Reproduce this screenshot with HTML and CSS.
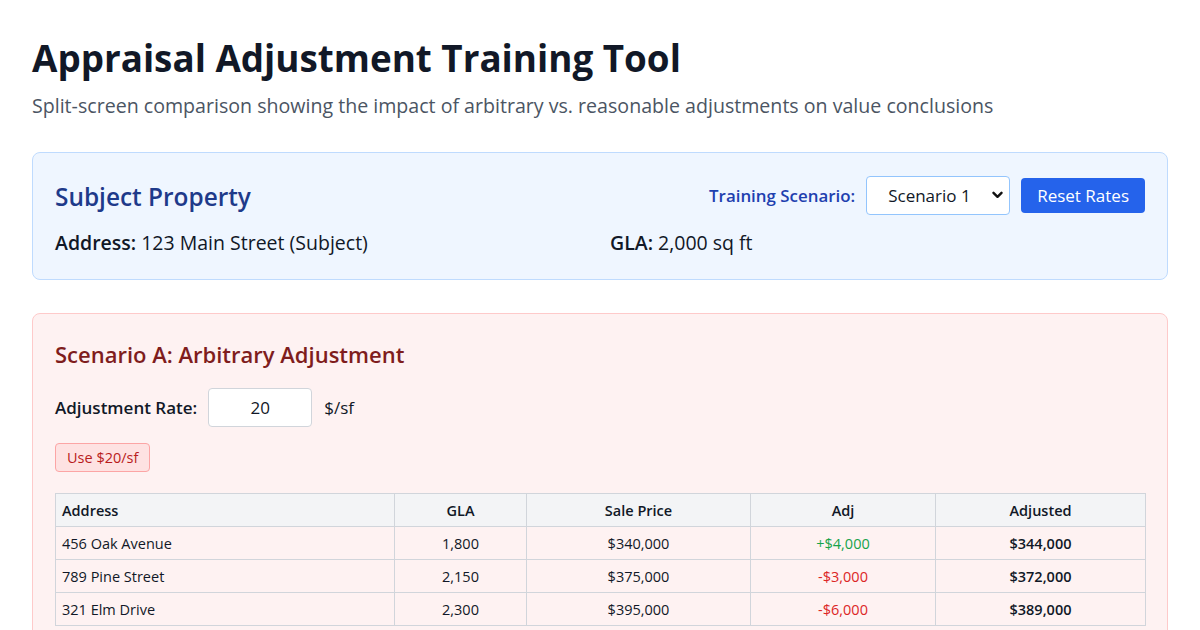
FILE: index.html
```html
<!DOCTYPE html>
<html lang="en">
<head>
<meta charset="utf-8">
<title>Appraisal Adjustment Training Tool</title>
<link rel="stylesheet" href="styles.css">
</head>
<body>
<div class="page">
  <h1 class="title">Appraisal Adjustment Training Tool</h1>
  <p class="subtitle">Split-screen comparison showing the impact of arbitrary vs. reasonable adjustments on value conclusions</p>

  <section class="subject">
    <div class="subject-head">
      <h2 class="subject-title">Subject Property</h2>
      <div class="controls">
        <label class="ctrl-label" for="scenario">Training Scenario:</label>
        <span class="select-wrap">
          <select id="scenario" class="select">
            <option>Scenario 1</option>
            <option>Scenario 2</option>
          </select>
          <svg class="chev" width="11" height="8" viewBox="0 0 11 8"><path d="M1.5 1.8 L5.5 5.8 L9.5 1.8" fill="none" stroke="#111" stroke-width="2.4" stroke-linecap="round" stroke-linejoin="round"/></svg>
        </span>
        <button class="btn-primary">Reset Rates</button>
      </div>
    </div>
    <div class="subject-info">
      <div><b>Address:</b> 123 Main Street (Subject)</div>
      <div><b>GLA:</b> 2,000 sq ft</div>
    </div>
  </section>

  <section class="scenario">
    <h3 class="scenario-title">Scenario A: Arbitrary Adjustment</h3>
    <div class="rate-row">
      <label class="rate-label" for="rate">Adjustment Rate:</label>
      <input id="rate" class="rate-input" type="text" value="20">
      <span class="unit">$/sf</span>
    </div>
    <button class="btn-soft">Use $20/sf</button>
    <table class="grid">
      <colgroup>
        <col class="c1"><col class="c2"><col class="c3"><col class="c4"><col class="c5">
      </colgroup>
      <thead>
        <tr><th class="left">Address</th><th>GLA</th><th>Sale Price</th><th>Adj</th><th>Adjusted</th></tr>
      </thead>
      <tbody>
        <tr><td class="left">456 Oak Avenue</td><td>1,800</td><td>$340,000</td><td class="pos">+$4,000</td><td class="strong">$344,000</td></tr>
        <tr><td class="left">789 Pine Street</td><td>2,150</td><td>$375,000</td><td class="neg">-$3,000</td><td class="strong">$372,000</td></tr>
        <tr><td class="left">321 Elm Drive</td><td>2,300</td><td>$395,000</td><td class="neg">-$6,000</td><td class="strong">$389,000</td></tr>
      </tbody>
    </table>
  </section>
</div>
</body>
</html>
```

FILE: styles.css
```css
* { box-sizing: border-box; }
html, body { margin: 0; padding: 0; background: #ffffff; }
body {
  font-family: "Open Sans", "Noto Sans", sans-serif;
  color: #111827;
}
.page {
  padding: 33px 32px 0 32px;
}
.title {
  margin: 0;
  font-size: 36.8px;
  line-height: 50px;
  font-weight: 700;
  color: #111827;
}
.subtitle {
  margin: 9px 0 32px 0;
  font-size: 19.6px;
  line-height: 28px;
  color: #4b5563;
}
.subject {
  border: 1.5px solid #bfdbfe;
  background: #eff6ff;
  border-radius: 8px;
  padding: 23px 22px 24px 22px;
}
.subject-head {
  display: flex;
  justify-content: space-between;
  align-items: center;
}
.subject-title {
  margin: 0;
  font-size: 24.4px;
  line-height: 36px;
  padding-top: 3px;
  font-weight: 600;
  color: #1e3a8a;
}
.controls {
  display: flex;
  align-items: center;
  gap: 11px;
}
.ctrl-label {
  font-size: 16.9px;
  font-weight: 600;
  color: #1e40af;
}
.select-wrap {
  position: relative;
  display: inline-block;
}
.select {
  display: block;
  appearance: none;
  -webkit-appearance: none;
  width: 144px;
  height: 39px;
  border: 1px solid #93c5fd;
  border-radius: 4px;
  background: #ffffff;
  font-family: inherit;
  font-size: 17px;
  color: #111827;
  padding: 0 0 0 21px;
}
.chev {
  position: absolute;
  right: 7px;
  top: 15px;
  pointer-events: none;
}
.btn-primary {
  height: 35px;
  padding: 0 16px;
  background: #2563eb;
  color: #ffffff;
  border: none;
  border-radius: 4px;
  font-family: inherit;
  font-size: 17px;
}
.subject-info {
  margin-top: 16px;
  display: grid;
  grid-template-columns: 1fr 1fr;
  column-gap: 20px;
  font-size: 19.5px;
  line-height: 24px;
}
.subject-info b { font-weight: 600; }

.scenario {
  margin-top: 33px;
  border: 1.5px solid #fecaca;
  background: #fef2f2;
  border-radius: 8px;
  padding: 24px 22px 24px 22px;
}
.scenario-title {
  margin: 0;
  font-size: 22px;
  line-height: 33px;
  font-weight: 600;
  color: #7f1d1d;
}
.rate-row {
  margin-top: 17px;
  display: flex;
  align-items: center;
}
.rate-label {
  font-size: 17px;
  font-weight: 600;
  margin-right: 11px;
}
.rate-input {
  width: 104px;
  height: 39px;
  border: 1px solid #d1d5db;
  border-radius: 4px;
  background: #ffffff;
  text-align: center;
  font-family: inherit;
  font-size: 17px;
  color: #111827;
}
.unit {
  margin-left: 12px;
  font-size: 17px;
}
.btn-soft {
  display: block;
  margin-top: 16px;
  height: 29px;
  padding: 0 11px;
  background: #fee2e2;
  border: 1px solid #fca5a5;
  border-radius: 4px;
  color: #b91c1c;
  font-family: inherit;
  font-size: 14.5px;
}
.grid {
  margin-top: 21px;
  width: 100%;
  border-collapse: collapse;
  table-layout: fixed;
  font-size: 14.5px;
}
.c1 { width: 339px; }
.c2 { width: 132px; }
.c3 { width: 224px; }
.c4 { width: 185px; }
.c5 { width: 210px; }
.grid th, .grid td {
  border: 1px solid #d1d5db;
  height: 33px;
  padding: 0 6px;
  text-align: center;
}
.grid th {
  background: #f3f4f6;
  font-weight: 600;
}
.grid .left { text-align: left; }
.pos { color: #16a34a; }
.neg { color: #dc2626; }
.strong { font-weight: 600; }
```
